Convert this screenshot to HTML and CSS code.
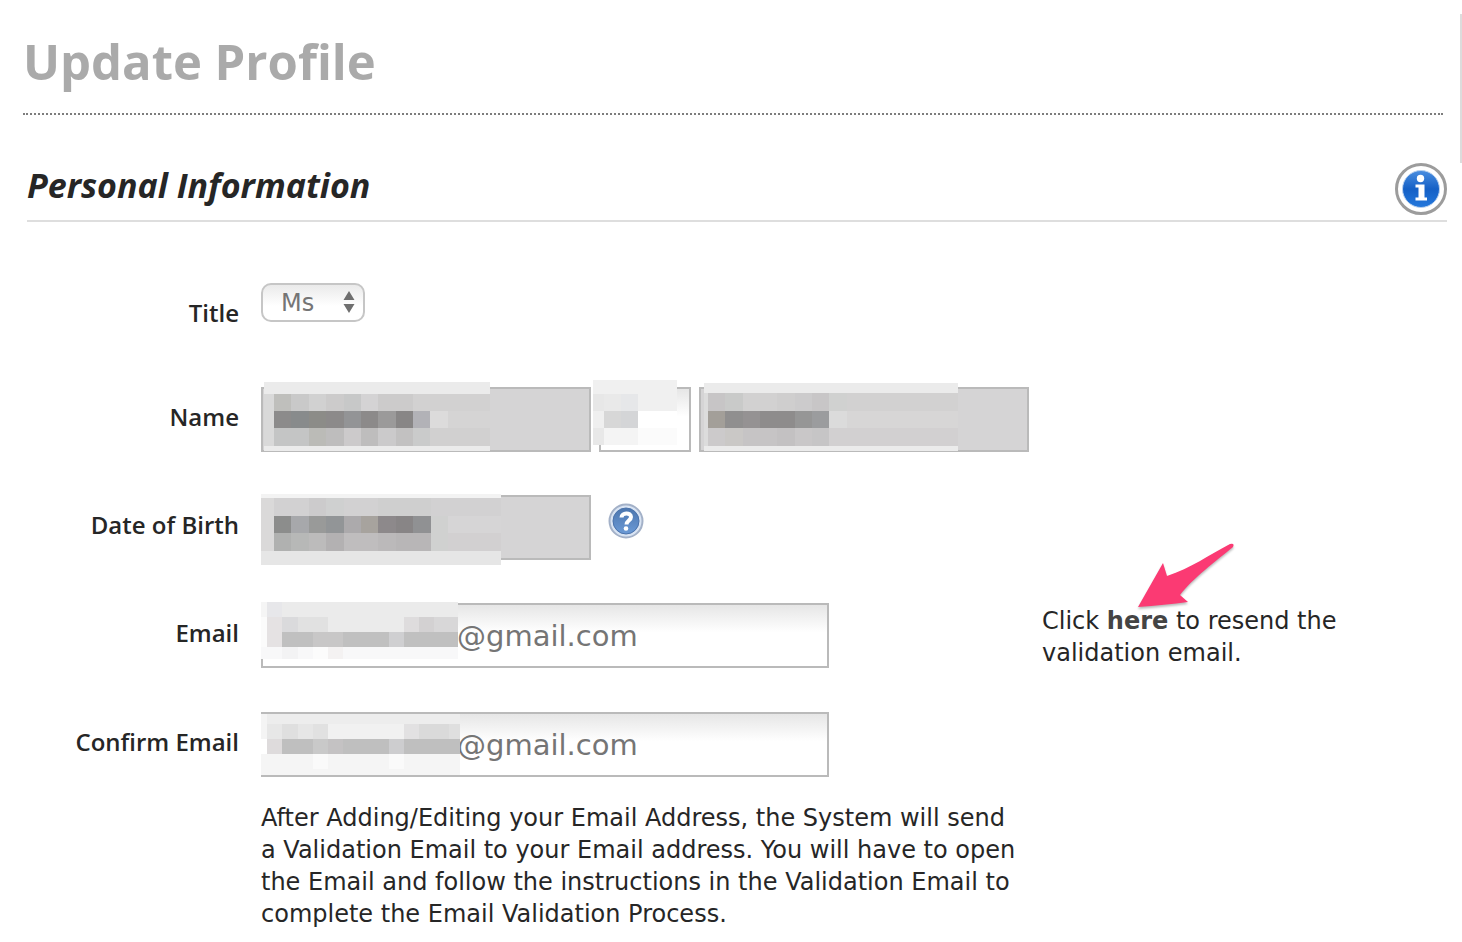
FILE: index.html
```html
<!DOCTYPE html>
<html lang="en">

<head>
    <meta charset="utf-8">
    <title>Update Profile</title>
    <link rel="stylesheet" href="styles.css">
</head>

<body>
    <header class="page-head">
        <h1>Update Profile</h1>
    </header>

    <div class="section-head">
        <h2>Personal Information</h2>
        <button class="icon-btn" type="button" aria-label="Information">
            <svg width="52" height="52" viewBox="0 0 52 52">
                <defs>
                    <linearGradient id="infoBlue" x1="0" y1="0" x2="0" y2="1">
                        <stop offset="0" stop-color="#4a8ee0" />
                        <stop offset="0.5" stop-color="#1560c6" />
                        <stop offset="1" stop-color="#2478dc" />
                    </linearGradient>
                </defs>
                <circle cx="26" cy="26" r="24.5" fill="#fff" stroke="#9c9c9c" stroke-width="3" />
                <circle cx="26" cy="26" r="18.5" fill="url(#infoBlue)" stroke="#b8d0ee" stroke-width="1" />
                <circle cx="25.5" cy="15.5" r="3.7" fill="#fff" />
                <path d="M20.5 21.500h9v13h2.500v3h-11.500v-3h3v-10h-3z" fill="#fff" />
            </svg>
        </button>
    </div>

    <form>
        <div class="row row-title">
            <label for="title">Title</label>
            <div class="field select-field">
                <select id="title">
                    <option>Ms</option>
                    <option>Mr</option>
                </select>
                <svg class="arrows" width="12" height="22" viewBox="0 0 12 22">
                    <path d="M6 0l5.500 9h-11zM6 22l5.500-9h-11z" fill="#6f6f6f" />
                </svg>
            </div>
        </div>

        <div class="row">
            <label for="first">Name</label>
            <div class="names">
                <div class="field medium">
                    <input id="first" type="text" readonly>
                    <svg class="mask mask-first" width="226" height="69" shape-rendering="crispEdges">
                        <rect width="226" height="69" fill="#ebebeb" />
                        <rect y="12" width="226" height="17" fill="#d2d1d1" />
                        <rect y="29" width="226" height="17" fill="#d5d4d4" />
                        <rect y="46" width="226" height="18" fill="#d1d0d0" />
                        <rect y="12" width="10" height="52" fill="#d9d9d9" />
                        <rect x="10" y="12" width="17" height="17" fill="#bfbfbc" />
                        <rect x="27" y="12" width="18" height="17" fill="#c9c9c9" />
                        <rect x="45" y="12" width="17" height="17" fill="#d1d1d1" />
                        <rect x="62" y="12" width="18" height="17" fill="#cccbcb" />
                        <rect x="80" y="12" width="17" height="17" fill="#c7c8c8" />
                        <rect x="97" y="12" width="17" height="17" fill="#d4d3d4" />
                        <rect x="114" y="12" width="35" height="17" fill="#cccbcb" />
                        <rect x="10" y="29" width="17" height="17" fill="#8c8b8b" />
                        <rect x="27" y="29" width="18" height="17" fill="#888b8c" />
                        <rect x="45" y="29" width="17" height="17" fill="#8c8c88" />
                        <rect x="62" y="29" width="18" height="17" fill="#8c8a8a" />
                        <rect x="80" y="29" width="17" height="17" fill="#939496" />
                        <rect x="97" y="29" width="17" height="17" fill="#8c8a8a" />
                        <rect x="114" y="29" width="18" height="17" fill="#9b9a9a" />
                        <rect x="132" y="29" width="17" height="17" fill="#888686" />
                        <rect x="149" y="29" width="17" height="17" fill="#b2b2b7" />
                        <rect x="166" y="29" width="18" height="17" fill="#dcdbdb" />
                        <rect x="10" y="46" width="35" height="18" fill="#c4c5c5" />
                        <rect x="45" y="46" width="17" height="18" fill="#bbbbb7" />
                        <rect x="62" y="46" width="18" height="18" fill="#bebdbd" />
                        <rect x="80" y="46" width="17" height="18" fill="#cccacb" />
                        <rect x="97" y="46" width="17" height="18" fill="#bebdbd" />
                        <rect x="114" y="46" width="18" height="18" fill="#cbcacb" />
                        <rect x="132" y="46" width="17" height="18" fill="#c2c1c1" />
                        <rect x="149" y="46" width="17" height="18" fill="#cacbcb" />
                    </svg>
                </div>
                <div class="field small">
                    <input id="middle" type="text" aria-label="Middle initial">
                    <svg class="mask mask-middle" width="84" height="65" shape-rendering="crispEdges">
                        <rect width="84" height="31" fill="#f0f0f0" />
                        <rect y="31" width="84" height="17" fill="#fff" />
                        <rect y="48" width="84" height="17" fill="#fbfbfb" />
                        <rect y="14" width="11" height="17" fill="#e7e7e7" />
                        <rect x="11" y="14" width="17" height="17" fill="#e9e9e9" />
                        <rect x="28" y="14" width="17" height="17" fill="#e6e7e9" />
                        <rect y="31" width="11" height="17" fill="#efefef" />
                        <rect x="11" y="31" width="17" height="17" fill="#d7d7d7" />
                        <rect x="28" y="31" width="17" height="17" fill="#d4d5d7" />
                        <rect y="48" width="11" height="17" fill="#e8e8e8" />
                        <rect x="11" y="48" width="34" height="17" fill="#f4f4f4" />
                    </svg>
                </div>
                <div class="field medium">
                    <input id="last" type="text" aria-label="Last name" readonly>
                    <svg class="mask mask-last" width="254" height="68" shape-rendering="crispEdges">
                        <rect width="254" height="68" fill="#ebebeb" />
                        <rect y="10" width="254" height="18" fill="#d2d1d1" />
                        <rect y="28" width="254" height="17" fill="#d7d6d6" />
                        <rect y="45" width="254" height="18" fill="#d2d0d1" />
                        <rect y="10" width="4" height="53" fill="#dcdcdc" />
                        <rect x="4" y="10" width="17" height="18" fill="#c7c5c6" />
                        <rect x="21" y="10" width="18" height="18" fill="#c9cac9" />
                        <rect x="73" y="10" width="18" height="18" fill="#cfcece" />
                        <rect x="91" y="10" width="17" height="18" fill="#cccbcc" />
                        <rect x="108" y="10" width="17" height="18" fill="#c8c6c7" />
                        <rect x="125" y="10" width="18" height="18" fill="#d0d1d0" />
                        <rect x="4" y="28" width="17" height="17" fill="#a39f99" />
                        <rect x="21" y="28" width="18" height="17" fill="#908f8f" />
                        <rect x="39" y="28" width="17" height="17" fill="#959293" />
                        <rect x="56" y="28" width="35" height="17" fill="#8e8c8c" />
                        <rect x="91" y="28" width="17" height="17" fill="#969696" />
                        <rect x="108" y="28" width="17" height="17" fill="#9b9c9e" />
                        <rect x="125" y="28" width="18" height="17" fill="#dbdbdb" />
                        <rect x="4" y="45" width="17" height="18" fill="#cccacb" />
                        <rect x="21" y="45" width="18" height="18" fill="#cac8c6" />
                        <rect x="39" y="45" width="34" height="18" fill="#c6c4c5" />
                        <rect x="73" y="45" width="18" height="18" fill="#c3c1c2" />
                        <rect x="91" y="45" width="17" height="18" fill="#c9c7c8" />
                        <rect x="108" y="45" width="17" height="18" fill="#c6c5c6" />
                    </svg>
                </div>
            </div>
        </div>

        <div class="row">
            <label for="dob">Date of Birth</label>
            <div class="field medium">
                <input id="dob" type="text" readonly>
                <svg class="mask mask-dob" width="240" height="71" shape-rendering="crispEdges">
                    <rect width="240" height="4" fill="#f3f3f3" />
                    <rect y="4" width="240" height="18" fill="#d2d1d2" />
                    <rect y="22" width="240" height="17" fill="#d6d5d6" />
                    <rect y="39" width="240" height="18" fill="#d2d0d1" />
                    <rect y="57" width="240" height="14" fill="#e6e6e6" />
                    <rect y="4" width="13" height="53" fill="#dad9d9" />
                    <rect x="48" y="4" width="17" height="18" fill="#cccbcc" />
                    <rect x="65" y="4" width="18" height="18" fill="#cfd0d0" />
                    <rect x="117" y="4" width="53" height="18" fill="#cfcfcf" />
                    <rect x="13" y="22" width="17" height="17" fill="#8c8d8c" />
                    <rect x="30" y="22" width="18" height="17" fill="#a7a8ab" />
                    <rect x="48" y="22" width="17" height="17" fill="#999a99" />
                    <rect x="65" y="22" width="18" height="17" fill="#929597" />
                    <rect x="83" y="22" width="17" height="17" fill="#acaaac" />
                    <rect x="100" y="22" width="17" height="17" fill="#a7a39e" />
                    <rect x="117" y="22" width="18" height="17" fill="#8d898b" />
                    <rect x="135" y="22" width="17" height="17" fill="#888586" />
                    <rect x="152" y="22" width="18" height="17" fill="#909193" />
                    <rect x="170" y="22" width="17" height="35" fill="#d0d1d0" />
                    <rect x="13" y="39" width="17" height="18" fill="#b0b1b0" />
                    <rect x="30" y="39" width="18" height="18" fill="#b7b8b7" />
                    <rect x="48" y="39" width="17" height="18" fill="#bcbbbb" />
                    <rect x="65" y="39" width="18" height="18" fill="#b3b1b2" />
                    <rect x="83" y="39" width="34" height="18" fill="#bfbdbe" />
                    <rect x="117" y="39" width="18" height="18" fill="#bbb9ba" />
                    <rect x="135" y="39" width="35" height="18" fill="#b8b6b7" />
                </svg>
            </div>
            <button class="icon-btn help" type="button" aria-label="Help">
                <svg width="36" height="36" viewBox="0 0 36 36">
                    <defs>
                        <linearGradient id="helpBlue" x1="0" y1="0" x2="0" y2="1">
                            <stop offset="0" stop-color="#4c76ae" />
                            <stop offset="1" stop-color="#6b9ad6" />
                        </linearGradient>
                    </defs>
                    <circle cx="18" cy="18" r="16.500" fill="#d9e4f3" stroke="#a3b1c8" stroke-width="2" />
                    <circle cx="18" cy="18" r="13" fill="url(#helpBlue)" stroke="#4a72ab" stroke-width="1" />
                    <path d="M13.500 14.500c0-5 9.500-5.500 9.500-.5 0 3.500-4.500 3.500-4.500 7.500" fill="none" stroke="#fff" stroke-width="4" />
                    <circle cx="18" cy="25.500" r="2.300" fill="#fff" />
                </svg>
            </button>
        </div>

        <div class="row">
            <label for="email">Email</label>
            <div class="field large">
                <input id="email" type="text" value="@gmail.com">
                <svg class="mask mask-email" width="197" height="57" shape-rendering="crispEdges">
                    <rect width="197" height="30" fill="#ebebeb" />
                    <rect y="30" width="197" height="15" fill="#c0c0c0" />
                    <rect y="45" width="197" height="12" fill="#f8f8f9" />
                    <rect width="6" height="15" fill="#f5f5f5" />
                    <rect x="6" width="15" height="15" fill="#e7e7ea" />
                    <rect y="15" width="6" height="30" fill="#fbfbfb" />
                    <rect x="6" y="15" width="15" height="30" fill="#e5e2e3" />
                    <rect x="21" y="15" width="16" height="15" fill="#dadadc" />
                    <rect x="37" y="15" width="30" height="15" fill="#e1e1e1" />
                    <rect x="143" y="15" width="15" height="15" fill="#dedcdd" />
                    <rect x="158" y="15" width="15" height="15" fill="#d3d1d2" />
                    <rect x="173" y="15" width="24" height="15" fill="#d8d7d8" />
                    <rect x="52" y="30" width="30" height="15" fill="#c8c7c7" />
                    <rect x="128" y="30" width="15" height="15" fill="#cfcfd1" />
                    <rect x="21" y="45" width="16" height="12" fill="#f3f3f4" />
                    <rect x="52" y="45" width="15" height="12" fill="#fcfcfc" />
                    <rect x="67" y="45" width="15" height="12" fill="#f4f2f2" />
                </svg>
            </div>
            <div class="note">
                <p>Click <a href="#">here</a> to resend the validation email.</p>
                <svg class="pointer" width="102" height="68" viewBox="0 0 102 68">
                    <path d="M3 65L28 21l4 13C56 26 74 13 95 2q5-1 3 3C82 18 57 37 45 53l8 7Q30 63 3 65z" fill="#fb3a73" />
                </svg>
            </div>
        </div>

        <div class="row">
            <label for="confirm">Confirm Email</label>
            <div class="field large">
                <input id="confirm" type="text" value="@gmail.com">
                <svg class="mask mask-confirm" width="199" height="63" shape-rendering="crispEdges">
                    <rect width="199" height="25" fill="#ededed" />
                    <rect y="25" width="199" height="15" fill="#bfbfbf" />
                    <rect y="40" width="199" height="21" fill="#f5f5f5" />
                    <rect y="61" width="6" height="2" fill="#bababa" />
                    <rect width="6" height="25" fill="#f4f4f4" />
                    <rect x="6" y="10" width="15" height="15" fill="#e7e7e7" />
                    <rect x="21" y="10" width="16" height="15" fill="#dfdfdf" />
                    <rect x="37" y="10" width="15" height="15" fill="#e6e6e6" />
                    <rect x="52" y="10" width="15" height="15" fill="#e1e1e1" />
                    <rect x="67" y="10" width="76" height="15" fill="#f1f1f1" />
                    <rect x="143" y="10" width="15" height="15" fill="#e2e1e2" />
                    <rect x="158" y="10" width="30" height="15" fill="#dadada" />
                    <rect x="188" y="10" width="11" height="15" fill="#dfdfdf" />
                    <rect y="25" width="6" height="15" fill="#fff" />
                    <rect x="6" y="25" width="15" height="15" fill="#dedbdc" />
                    <rect x="52" y="25" width="15" height="15" fill="#c9c9c9" />
                    <rect x="67" y="25" width="15" height="15" fill="#c4c2c3" />
                    <rect x="128" y="25" width="15" height="15" fill="#cdcdcf" />
                    <rect x="52" y="40" width="15" height="15" fill="#fafafa" />
                    <rect x="128" y="40" width="15" height="15" fill="#fafafa" />
                </svg>
            </div>
        </div>

        <p class="hint">
            After Adding/Editing your Email Address, the System will send a Validation Email to your Email address. You will have to open the Email and follow the instructions in the Validation Email to complete the Email Validation Process.
        </p>
    </form>
</body>

</html>
```

FILE: styles.css
```css
* {
    box-sizing: border-box;
}

body {
    margin: 0;
    background-color: #fff;
    color: #262626;
    font-family: Verdana, "DejaVu Sans", sans-serif;
    font-size: 24px;
    line-height: 32px;
}

h1,
h2,
p {
    margin: 0;
}

.page-head {
    margin-top: 14px;
    padding: 12px 17px 48px 23px;
    border-right: 2px solid #dcdcdc;
}

h1 {
    padding-bottom: 17px;
    border-bottom: 2px dotted #7d7d7d;
    color: #aaa;
    font: bold 49px/70px "Open Sans", sans-serif;
}

.section-head {
    display: flex;
    justify-content: space-between;
    align-items: center;
    margin: 0 15px 0 27px;
    padding-bottom: 5px;
    border-bottom: 2px solid #dedede;
}

h2 {
    padding-bottom: 8px;
    font: italic bold 34px/44px "Open Sans", sans-serif;
}

.icon-btn {
    padding: 0;
    border: 0;
    background: none;
}

.icon-btn svg {
    display: block;
}

form {
    padding-top: 61px;
}

.row {
    display: flex;
    align-items: flex-start;
    margin-bottom: 43px;
}

.row-title {
    margin-bottom: 58px;
}

label {
    width: 239px;
    margin-right: 22px;
    padding-top: 14px;
    text-align: right;
    font: 600 24px/32px "Open Sans", sans-serif;
}

.field {
    position: relative;
}

.names {
    display: flex;
    gap: 8px;
}

.small {
    width: 92px;
}

.medium {
    width: 330px;
}

.large {
    width: 568px;
}

input {
    display: block;
    width: 100%;
    height: 65px;
    padding: 0 8px;
    border: 2px solid #bababa;
    background: linear-gradient(#e6e6e6, #fff 45%);
    color: #757575;
    font: 29px Verdana, "DejaVu Sans", sans-serif;
}

input[readonly] {
    background: #d5d4d5;
}

/* the hidden part of the address takes up the left side */
.large input {
    padding-left: 194px;
}

select {
    display: block;
    appearance: none;
    width: 104px;
    height: 39px;
    padding: 0 18px;
    border: 2px solid #c6c6c6;
    border-radius: 10px;
    background: linear-gradient(#eaeaea, #fff 60%);
    color: #757575;
    font: 24px Verdana, "DejaVu Sans", sans-serif;
}

.arrows {
    position: absolute;
    top: 8px;
    right: 10px;
    pointer-events: none;
}

.mask {
    position: absolute;
    left: 0;
    top: -1px;
}

.mask-first {
    left: 3px;
    top: -5px;
}

.mask-middle {
    left: -6px;
    top: -7px;
}

.mask-last {
    left: 5px;
    top: -4px;
}

.mask-confirm {
    top: 2px;
}

.help {
    margin: 8px 0 0 17px;
}

.note {
    position: relative;
    width: 320px;
    margin-left: 213px;
    padding-top: 2px;
}

.note a {
    color: #444;
    font-weight: bold;
    text-decoration: none;
}

.pointer {
    position: absolute;
    left: 93px;
    top: -61px;
    filter: drop-shadow(0 2px 1px #bbb);
}

.hint {
    max-width: 760px;
    margin: -18px 0 0 261px;
}
```
